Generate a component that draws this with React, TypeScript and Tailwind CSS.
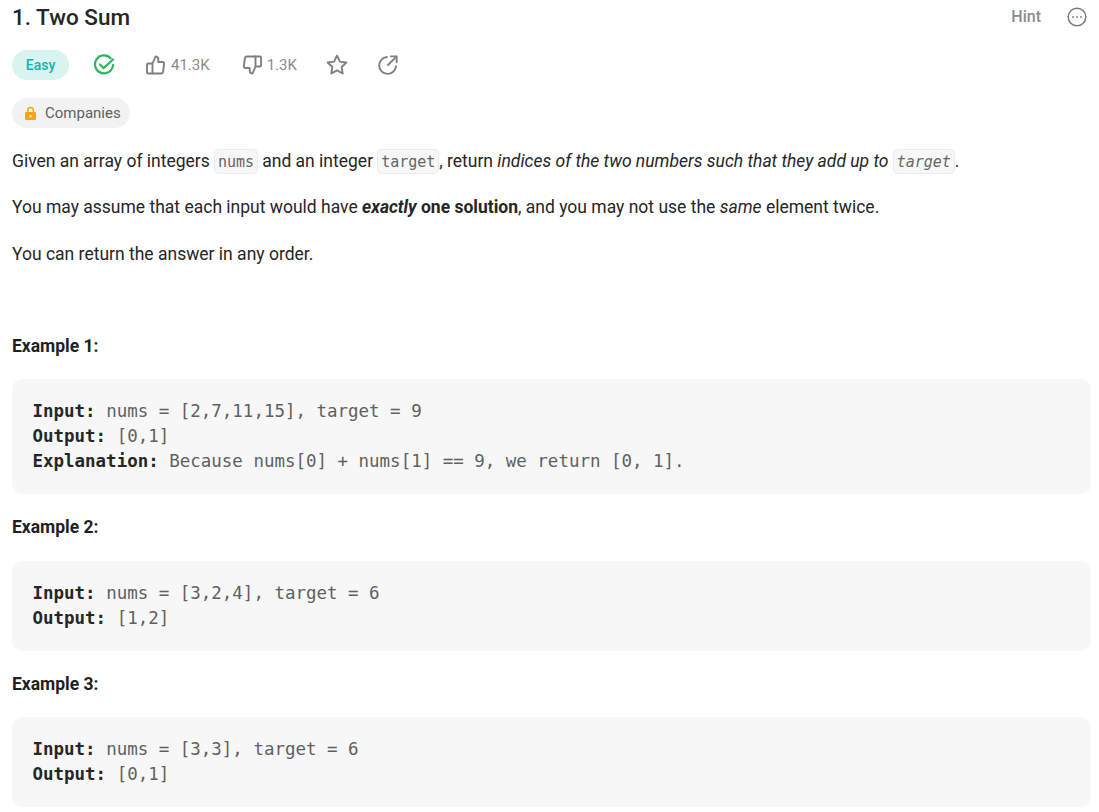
const mono = 'font-["DejaVu_Sans_Mono",monospace]';

const Code = ({ children, italic }: { children: string; italic?: boolean }) => (
  <code className={`${mono} ${italic ? 'italic' : ''} align-[1px] text-[15px] leading-[20px] text-[#666666] bg-[#f7f7f7] border border-[#ececec] rounded-[5px] px-[2.8px] py-[2.5px]`}>
    {children}
  </code>
);

const CheckCircle = () => (
  <svg width="22" height="22" viewBox="0 0 22 22" fill="none" stroke="#2cb55d" strokeWidth="2.200" strokeLinecap="round" strokeLinejoin="round">
    <path d="M17.600 4.200A9 9 0 1 0 20 11" />
    <path d="M7 10.500l3.600 3.600L20 5.500" />
  </svg>
);

const ThumbUp = () => (
  <svg width="20" height="20" viewBox="0 0 20 20" fill="none" stroke="#808080" strokeWidth="1.900" strokeLinejoin="round" strokeLinecap="round">
    <path d="M6.500 8.500H2a1 1 0 0 0-1 1v8a1 1 0 0 0 1 1h4.500z" />
    <path d="M6.500 8.500l3-7c1.600 0 2.800 1.200 2.800 2.800V7h4.200c1.100 0 1.800.9 1.600 2l-1.100 8c-.2.900-.8 1.500-1.700 1.500H6.500" />
  </svg>
);

const ThumbDown = () => (
  <svg width="20" height="20" viewBox="0 0 20 20" fill="none" stroke="#808080" strokeWidth="1.900" strokeLinejoin="round" strokeLinecap="round">
    <path d="M13.500 11.500H18a1 1 0 0 0 1-1v-8a1 1 0 0 0-1-1h-4.500z" />
    <path d="M13.500 11.500l-3 7c-1.600 0-2.800-1.200-2.800-2.800V13H3.500c-1.100 0-1.800-.9-1.600-2l1.100-8c.2-.9.8-1.500 1.700-1.500h8.800" />
  </svg>
);

const StarIcon = () => (
  <svg width="22" height="22" viewBox="0 0 20 20" fill="none" stroke="#808080" strokeWidth="1.700" strokeLinejoin="round">
    <path d="M10 1.500l2.600 5.400 5.900.8-4.300 4.100 1 5.900-5.200-2.800-5.200 2.800 1-5.900L1.500 7.700l5.900-.8z" />
  </svg>
);

const ShareIcon = () => (
  <svg width="20" height="20" viewBox="0 0 18 18" fill="none" stroke="#808080" strokeWidth="1.700" strokeLinecap="round" strokeLinejoin="round">
    <path d="M8 1.800A7.600 7.600 0 1 0 16.200 10" />
    <path d="M9 9l7.500-7.500" />
    <path d="M11.500 1.200h5.300v5.300" />
  </svg>
);

const Lock = () => (
  <svg width="13" height="14" viewBox="0 0 13 14" fill="#ffa116">
    <path d="M3 6V4.200a3.500 3.500 0 0 1 7 0V6h.8c.7 0 1.200.5 1.200 1.200v5.600c0 .7-.5 1.200-1.200 1.200H2.200C1.500 14 1 13.500 1 12.800V7.200C1 6.500 1.500 6 2.200 6H3zm1.500 0h4V4.200a2 2 0 0 0-4 0V6zm2 3a1.200 1.200 0 1 0 0 2.400 1.200 1.200 0 0 0 0-2.400z" fillRule="evenodd" />
  </svg>
);

const MoreCircle = () => (
  <svg width="20" height="20" viewBox="0 0 20 20" fill="none" stroke="#7a7a7a" strokeWidth="1.500">
    <circle cx="10" cy="10" r="8.800" />
    <circle cx="6" cy="10" r="0.9" fill="#7a7a7a" stroke="none" />
    <circle cx="10" cy="10" r="0.9" fill="#7a7a7a" stroke="none" />
    <circle cx="14" cy="10" r="0.9" fill="#7a7a7a" stroke="none" />
  </svg>
);

const examples = [
  {
    title: 'Example 1:',
    lines: [
      ['Input:', 'nums = [2,7,11,15], target = 9'],
      ['Output:', '[0,1]'],
      ['Explanation:', 'Because nums[0] + nums[1] == 9, we return [0, 1].'],
    ],
  },
  {
    title: 'Example 2:',
    lines: [
      ['Input:', 'nums = [3,2,4], target = 6'],
      ['Output:', '[1,2]'],
    ],
  },
  {
    title: 'Example 3:',
    lines: [
      ['Input:', 'nums = [3,3], target = 6'],
      ['Output:', '[0,1]'],
    ],
  },
];

export default function App() {
  return (
    <div className='font-["Roboto",sans-serif] bg-white h-[812px] overflow-hidden pl-3 pr-2 text-[#262626]'>
      {/* Header */}
      <div className="flex items-center justify-between h-[34px]">
        <h1 className="text-[22.500px] font-medium leading-[34px]">1. Two Sum</h1>
        <div className="flex items-center gap-[26px] pr-[4px] text-[#8c8c8c]">
          <span className="text-[16px] font-medium">Hint</span>
          <MoreCircle />
        </div>
      </div>

      {/* Meta row */}
      <div className="flex items-center mt-[16px] h-[30px]">
        <span className="flex items-center justify-center w-[57px] h-[30px] rounded-full bg-[#d9f3f1] text-[#0eb5ab] text-[14px] font-medium">
          Easy
        </span>
        <span className="ml-[24px]"><CheckCircle /></span>
        <span className="flex items-center ml-[31px] text-[#8c8c8c] text-[15px]">
          <ThumbUp />
          <span className="ml-[5px]">41.3K</span>
        </span>
        <span className="flex items-center ml-[32px] text-[#8c8c8c] text-[15px]">
          <ThumbDown />
          <span className="ml-[5px]">1.3K</span>
        </span>
        <span className="ml-[29px]"><StarIcon /></span>
        <span className="ml-[30px]"><ShareIcon /></span>
      </div>

      {/* Companies */}
      <div className="flex mt-[18px]">
        <span className="flex items-center h-[30px] w-[118px] pl-[12px] rounded-full bg-[#f2f2f2] text-[#616161] text-[15px]">
          <Lock />
          <span className="ml-[8px]">Companies</span>
        </span>
      </div>

      {/* Description */}
      <div className="text-[17.500px] leading-[24px] text-[#262626]">
        <p className="mt-[21px]">
          Given an array of integers <Code>nums</Code> and an integer <Code>target</Code>, return{' '}
          <em>indices of the two numbers such that they add up to</em> <Code italic>target</Code>.
        </p>
        <p className="mt-[22px]">
          You may assume that each input would have <strong className="font-bold"><em>exactly</em> one solution</strong>, and you may not use the <em>same</em> element twice.
        </p>
        <p className="mt-[23px]">You can return the answer in any order.</p>
      </div>

      {/* Examples */}
      <div className="mt-[67px]">
        {examples.map((example) => (
          <div key={example.title} className="mb-[20px]">
            <div className="text-[17.500px] leading-[26px] font-bold text-[#1f1f1f]">{example.title}</div>
            <pre className={`${mono} mt-[20.400px] bg-[#f7f7f7] rounded-[10px] pl-[20.500px] pr-5 py-[20px] text-[17.480px] leading-[25px] text-[#616161]`}>
              {example.lines.map(([label, value]) => (
                <div key={label}>
                  <strong className="font-bold text-[#262626]">{label}</strong> {value}
                </div>
              ))}
            </pre>
          </div>
        ))}
      </div>
    </div>
  );
}
